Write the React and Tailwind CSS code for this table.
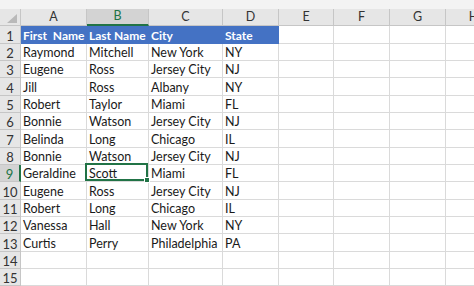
import React from "react";

const cols = ["A", "B", "C", "D", "E", "F", "G", "H"];
const data = [
  ["First  Name", "Last Name", "City", "State"],
  ["Raymond", "Mitchell", "New York", "NY"],
  ["Eugene", "Ross", "Jersey City", "NJ"],
  ["Jill", "Ross", "Albany", "NY"],
  ["Robert", "Taylor", "Miami", "FL"],
  ["Bonnie", "Watson", "Jersey City", "NJ"],
  ["Belinda", "Long", "Chicago", "IL"],
  ["Bonnie", "Watson", "Jersey City", "NJ"],
  ["Geraldine", "Scott", "Miami", "FL"],
  ["Eugene", "Ross", "Jersey City", "NJ"],
  ["Robert", "Long", "Chicago", "IL"],
  ["Vanessa", "Hall", "New York", "NY"],
  ["Curtis", "Perry", "Philadelphia", "PA"],
  [],
  [],
];

const heights = ["h-[18px]", "h-[17px]", "h-[17px]"];

export default function App() {
  return (
    <div
      className="w-[474px] h-[286px] overflow-hidden bg-white flex flex-col"
      style={{ fontFamily: "Lato, 'Open Sans', sans-serif" }}
    >
      <div className="h-[9px] shrink-0 bg-[#f3f3f3]" />
      <div className="grid grid-cols-[21px_66px_62px_74px_56px_55px_56px_56px_56px] w-[502px]">
        {/* header row */}
        <div className="h-[17px] bg-[#e6e6e6] border-r border-b border-[#c6c6c6] flex items-end justify-end pr-[3px] pb-[2px]">
          <svg width="10" height="9" viewBox="0 0 10 9">
            <polygon points="10,0 10,9 0,9" fill="#b9b9b9" />
          </svg>
        </div>
        {cols.map((c) =>
          c === "B" ? (
            <div
              key={c}
              className="h-[17px] bg-[#d3d3d3] border-r border-[#c6c6c6] border-b-2 border-b-[#217346] flex items-center justify-center text-[12.5px] text-[#217346]"
            >
              {c}
            </div>
          ) : (
            <div
              key={c}
              className="h-[17px] bg-[#e6e6e6] border-r border-b border-[#c6c6c6] flex items-center justify-center text-[12.5px] text-[#333333]"
            >
              {c}
            </div>
          )
        )}
        {data.map((row, ri) => {
          const h = heights[ri % 3];
          const rn = ri + 1;
          const sel = rn === 9;
          return (
            <React.Fragment key={ri}>
              {sel ? (
                <div
                  className={`${h} bg-[#d3d3d3] border-b border-[#c6c6c6] border-r-2 border-r-[#217346] flex items-end justify-center text-[13px] leading-[14px] text-[#217346]`}
                >
                  {rn}
                </div>
              ) : (
                <div
                  className={`${h} bg-[#e6e6e6] border-r border-b border-[#c6c6c6] flex items-end justify-center text-[13px] leading-[14px] text-[#333333]`}
                >
                  {rn}
                </div>
              )}
              {cols.map((c, ci) => {
                const v = row[ci] || "";
                if (ri === 0 && ci < 4) {
                  return (
                    <div
                      key={c}
                      className={`${h} bg-[#4472c4] border-b border-[#4472c4] flex items-end pl-[2px] text-[12px] leading-[14px] font-bold text-white whitespace-pre overflow-visible`}
                    >
                      {v}
                    </div>
                  );
                }
                const isSel = sel && c === "B";
                return (
                  <div
                    key={c}
                    className={`${h} relative border-r border-b border-[#dadada] flex items-end pl-[2px] text-[12.5px] leading-[14px] text-[#1a1a1a] whitespace-nowrap`}
                  >
                    {v}
                    {isSel && (
                      <div className="absolute -left-[2px] -top-[2px] right-0 bottom-0 border-2 border-[#217346] z-10">
                        <div className="absolute -right-[4px] -bottom-[4px] w-[6px] h-[6px] bg-[#217346] border border-white" />
                      </div>
                    )}
                  </div>
                );
              })}
            </React.Fragment>
          );
        })}
      </div>
    </div>
  );
}
